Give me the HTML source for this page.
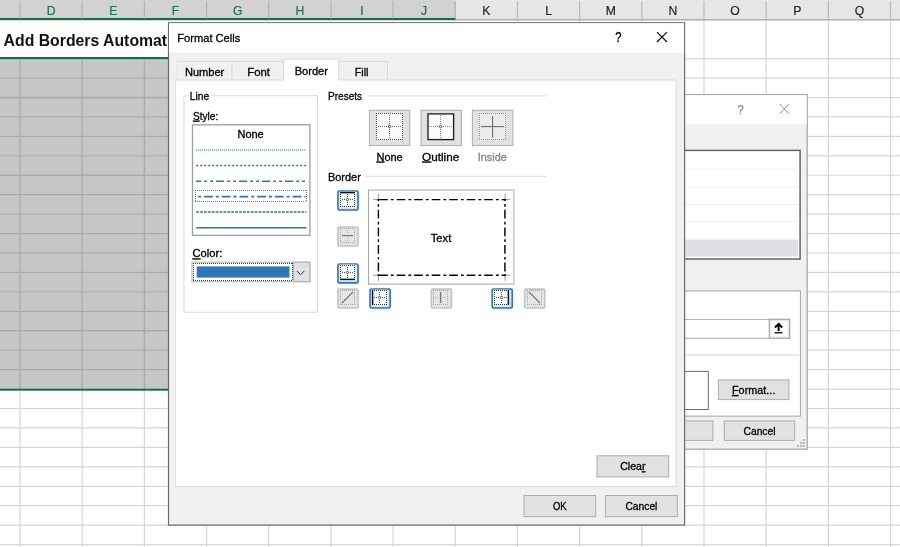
<!DOCTYPE html>
<html lang="en"><head><meta charset="utf-8"><title>Format Cells</title>
<style>
html,body{margin:0;padding:0;background:#fff;overflow:hidden}
svg{display:block;will-change:transform;opacity:0.999}
text{font-family:"Liberation Sans", sans-serif;}
</style></head>
<body>
<svg width="900" height="547" viewBox="0 0 900 547">
<rect x="0" y="0" width="900" height="547" fill="#ffffff"/>
<rect x="0" y="59.5" width="455.66" height="329.58" fill="#c6c6c6"/>
<line x1="20.00" y1="20" x2="20.00" y2="547" stroke="#d6d6d6" stroke-width="1.2"/>
<line x1="82.18" y1="20" x2="82.18" y2="547" stroke="#d6d6d6" stroke-width="1.2"/>
<line x1="144.36" y1="20" x2="144.36" y2="547" stroke="#d6d6d6" stroke-width="1.2"/>
<line x1="206.54" y1="20" x2="206.54" y2="547" stroke="#d6d6d6" stroke-width="1.2"/>
<line x1="268.72" y1="20" x2="268.72" y2="547" stroke="#d6d6d6" stroke-width="1.2"/>
<line x1="330.90" y1="20" x2="330.90" y2="547" stroke="#d6d6d6" stroke-width="1.2"/>
<line x1="393.08" y1="20" x2="393.08" y2="547" stroke="#d6d6d6" stroke-width="1.2"/>
<line x1="455.26" y1="20" x2="455.26" y2="547" stroke="#d6d6d6" stroke-width="1.2"/>
<line x1="517.44" y1="20" x2="517.44" y2="547" stroke="#d6d6d6" stroke-width="1.2"/>
<line x1="579.62" y1="20" x2="579.62" y2="547" stroke="#d6d6d6" stroke-width="1.2"/>
<line x1="641.80" y1="20" x2="641.80" y2="547" stroke="#d6d6d6" stroke-width="1.2"/>
<line x1="703.98" y1="20" x2="703.98" y2="547" stroke="#d6d6d6" stroke-width="1.2"/>
<line x1="766.16" y1="20" x2="766.16" y2="547" stroke="#d6d6d6" stroke-width="1.2"/>
<line x1="828.34" y1="20" x2="828.34" y2="547" stroke="#d6d6d6" stroke-width="1.2"/>
<line x1="890.52" y1="20" x2="890.52" y2="547" stroke="#d6d6d6" stroke-width="1.2"/>
<line x1="0" y1="58.60" x2="900" y2="58.60" stroke="#d6d6d6" stroke-width="1.2"/>
<line x1="0" y1="78.04" x2="900" y2="78.04" stroke="#d6d6d6" stroke-width="1.2"/>
<line x1="0" y1="97.48" x2="900" y2="97.48" stroke="#d6d6d6" stroke-width="1.2"/>
<line x1="0" y1="116.92" x2="900" y2="116.92" stroke="#d6d6d6" stroke-width="1.2"/>
<line x1="0" y1="136.36" x2="900" y2="136.36" stroke="#d6d6d6" stroke-width="1.2"/>
<line x1="0" y1="155.80" x2="900" y2="155.80" stroke="#d6d6d6" stroke-width="1.2"/>
<line x1="0" y1="175.24" x2="900" y2="175.24" stroke="#d6d6d6" stroke-width="1.2"/>
<line x1="0" y1="194.68" x2="900" y2="194.68" stroke="#d6d6d6" stroke-width="1.2"/>
<line x1="0" y1="214.12" x2="900" y2="214.12" stroke="#d6d6d6" stroke-width="1.2"/>
<line x1="0" y1="233.56" x2="900" y2="233.56" stroke="#d6d6d6" stroke-width="1.2"/>
<line x1="0" y1="253.00" x2="900" y2="253.00" stroke="#d6d6d6" stroke-width="1.2"/>
<line x1="0" y1="272.44" x2="900" y2="272.44" stroke="#d6d6d6" stroke-width="1.2"/>
<line x1="0" y1="291.88" x2="900" y2="291.88" stroke="#d6d6d6" stroke-width="1.2"/>
<line x1="0" y1="311.32" x2="900" y2="311.32" stroke="#d6d6d6" stroke-width="1.2"/>
<line x1="0" y1="330.76" x2="900" y2="330.76" stroke="#d6d6d6" stroke-width="1.2"/>
<line x1="0" y1="350.20" x2="900" y2="350.20" stroke="#d6d6d6" stroke-width="1.2"/>
<line x1="0" y1="369.64" x2="900" y2="369.64" stroke="#d6d6d6" stroke-width="1.2"/>
<line x1="0" y1="389.08" x2="900" y2="389.08" stroke="#d6d6d6" stroke-width="1.2"/>
<line x1="0" y1="408.52" x2="900" y2="408.52" stroke="#d6d6d6" stroke-width="1.2"/>
<line x1="0" y1="427.96" x2="900" y2="427.96" stroke="#d6d6d6" stroke-width="1.2"/>
<line x1="0" y1="447.40" x2="900" y2="447.40" stroke="#d6d6d6" stroke-width="1.2"/>
<line x1="0" y1="466.84" x2="900" y2="466.84" stroke="#d6d6d6" stroke-width="1.2"/>
<line x1="0" y1="486.28" x2="900" y2="486.28" stroke="#d6d6d6" stroke-width="1.2"/>
<line x1="0" y1="505.72" x2="900" y2="505.72" stroke="#d6d6d6" stroke-width="1.2"/>
<line x1="0" y1="525.16" x2="900" y2="525.16" stroke="#d6d6d6" stroke-width="1.2"/>
<line x1="0" y1="544.60" x2="900" y2="544.60" stroke="#d6d6d6" stroke-width="1.2"/>
<line x1="20.00" y1="60" x2="20.00" y2="389.08" stroke="#a9a9a9" stroke-width="1.4"/>
<line x1="82.18" y1="60" x2="82.18" y2="389.08" stroke="#a9a9a9" stroke-width="1.4"/>
<line x1="144.36" y1="60" x2="144.36" y2="389.08" stroke="#a9a9a9" stroke-width="1.4"/>
<line x1="206.54" y1="60" x2="206.54" y2="389.08" stroke="#a9a9a9" stroke-width="1.4"/>
<line x1="268.72" y1="60" x2="268.72" y2="389.08" stroke="#a9a9a9" stroke-width="1.4"/>
<line x1="330.90" y1="60" x2="330.90" y2="389.08" stroke="#a9a9a9" stroke-width="1.4"/>
<line x1="393.08" y1="60" x2="393.08" y2="389.08" stroke="#a9a9a9" stroke-width="1.4"/>
<line x1="0" y1="78.04" x2="455.66" y2="78.04" stroke="#a9a9a9" stroke-width="1.3"/>
<line x1="0" y1="97.48" x2="455.66" y2="97.48" stroke="#a9a9a9" stroke-width="1.3"/>
<line x1="0" y1="116.92" x2="455.66" y2="116.92" stroke="#a9a9a9" stroke-width="1.3"/>
<line x1="0" y1="136.36" x2="455.66" y2="136.36" stroke="#a9a9a9" stroke-width="1.3"/>
<line x1="0" y1="155.80" x2="455.66" y2="155.80" stroke="#a9a9a9" stroke-width="1.3"/>
<line x1="0" y1="175.24" x2="455.66" y2="175.24" stroke="#a9a9a9" stroke-width="1.3"/>
<line x1="0" y1="194.68" x2="455.66" y2="194.68" stroke="#a9a9a9" stroke-width="1.3"/>
<line x1="0" y1="214.12" x2="455.66" y2="214.12" stroke="#a9a9a9" stroke-width="1.3"/>
<line x1="0" y1="233.56" x2="455.66" y2="233.56" stroke="#a9a9a9" stroke-width="1.3"/>
<line x1="0" y1="253.00" x2="455.66" y2="253.00" stroke="#a9a9a9" stroke-width="1.3"/>
<line x1="0" y1="272.44" x2="455.66" y2="272.44" stroke="#a9a9a9" stroke-width="1.3"/>
<line x1="0" y1="291.88" x2="455.66" y2="291.88" stroke="#a9a9a9" stroke-width="1.3"/>
<line x1="0" y1="311.32" x2="455.66" y2="311.32" stroke="#a9a9a9" stroke-width="1.3"/>
<line x1="0" y1="330.76" x2="455.66" y2="330.76" stroke="#a9a9a9" stroke-width="1.3"/>
<line x1="0" y1="350.20" x2="455.66" y2="350.20" stroke="#a9a9a9" stroke-width="1.3"/>
<line x1="0" y1="369.64" x2="455.66" y2="369.64" stroke="#a9a9a9" stroke-width="1.3"/>
<rect x="0" y="20" width="455.66" height="37.2" fill="#ffffff"/>
<rect x="0" y="59.2" width="455.66" height="1" fill="#e2e2e2"/>
<rect x="0" y="57" width="456.66" height="2.3" fill="#107040"/>
<rect x="0" y="388.68" width="456.66" height="2" fill="#107040"/>
<text x="3.6" y="45.5" font-family='"Liberation Sans", sans-serif' font-weight="700" font-size="15.8" fill="#111">Add Borders Automatically</text>
<rect x="0" y="0" width="455.66" height="18.2" fill="#d2d2d2"/>
<rect x="455.66" y="0" width="444.34" height="19.4" fill="#e6e6e6"/>
<rect x="455.66" y="19.1" width="444.34" height="1.4" fill="#a8a8a8"/>
<rect x="0" y="18" width="455.66" height="2.2" fill="#107040"/>
<line x1="20.00" y1="1" x2="20.00" y2="18.4" stroke="#b4b4b4" stroke-width="1.3"/>
<line x1="82.18" y1="1" x2="82.18" y2="18.4" stroke="#b4b4b4" stroke-width="1.3"/>
<line x1="144.36" y1="1" x2="144.36" y2="18.4" stroke="#b4b4b4" stroke-width="1.3"/>
<line x1="206.54" y1="1" x2="206.54" y2="18.4" stroke="#b4b4b4" stroke-width="1.3"/>
<line x1="268.72" y1="1" x2="268.72" y2="18.4" stroke="#b4b4b4" stroke-width="1.3"/>
<line x1="330.90" y1="1" x2="330.90" y2="18.4" stroke="#b4b4b4" stroke-width="1.3"/>
<line x1="393.08" y1="1" x2="393.08" y2="18.4" stroke="#b4b4b4" stroke-width="1.3"/>
<line x1="455.26" y1="1" x2="455.26" y2="18.4" stroke="#b4b4b4" stroke-width="1.3"/>
<line x1="517.44" y1="1" x2="517.44" y2="18.4" stroke="#bdbdbd" stroke-width="1.3"/>
<line x1="579.62" y1="1" x2="579.62" y2="18.4" stroke="#bdbdbd" stroke-width="1.3"/>
<line x1="641.80" y1="1" x2="641.80" y2="18.4" stroke="#bdbdbd" stroke-width="1.3"/>
<line x1="703.98" y1="1" x2="703.98" y2="18.4" stroke="#bdbdbd" stroke-width="1.3"/>
<line x1="766.16" y1="1" x2="766.16" y2="18.4" stroke="#bdbdbd" stroke-width="1.3"/>
<line x1="828.34" y1="1" x2="828.34" y2="18.4" stroke="#bdbdbd" stroke-width="1.3"/>
<line x1="890.52" y1="1" x2="890.52" y2="18.4" stroke="#bdbdbd" stroke-width="1.3"/>
<text x="51.09" y="14.5" text-anchor="middle" font-family='"Liberation Sans", sans-serif' font-size="12.2" fill="#1e7145" stroke="#1e7145" stroke-width="0.2">D</text>
<text x="113.27" y="14.5" text-anchor="middle" font-family='"Liberation Sans", sans-serif' font-size="12.2" fill="#1e7145" stroke="#1e7145" stroke-width="0.2">E</text>
<text x="175.45" y="14.5" text-anchor="middle" font-family='"Liberation Sans", sans-serif' font-size="12.2" fill="#1e7145" stroke="#1e7145" stroke-width="0.2">F</text>
<text x="237.63" y="14.5" text-anchor="middle" font-family='"Liberation Sans", sans-serif' font-size="12.2" fill="#1e7145" stroke="#1e7145" stroke-width="0.2">G</text>
<text x="299.81" y="14.5" text-anchor="middle" font-family='"Liberation Sans", sans-serif' font-size="12.2" fill="#1e7145" stroke="#1e7145" stroke-width="0.2">H</text>
<text x="361.99" y="14.5" text-anchor="middle" font-family='"Liberation Sans", sans-serif' font-size="12.2" fill="#1e7145" stroke="#1e7145" stroke-width="0.2">I</text>
<text x="424.17" y="14.5" text-anchor="middle" font-family='"Liberation Sans", sans-serif' font-size="12.2" fill="#1e7145" stroke="#1e7145" stroke-width="0.2">J</text>
<text x="486.35" y="14.5" text-anchor="middle" font-family='"Liberation Sans", sans-serif' font-size="12.2" fill="#262626" stroke="#262626" stroke-width="0.2">K</text>
<text x="548.53" y="14.5" text-anchor="middle" font-family='"Liberation Sans", sans-serif' font-size="12.2" fill="#262626" stroke="#262626" stroke-width="0.2">L</text>
<text x="610.71" y="14.5" text-anchor="middle" font-family='"Liberation Sans", sans-serif' font-size="12.2" fill="#262626" stroke="#262626" stroke-width="0.2">M</text>
<text x="672.89" y="14.5" text-anchor="middle" font-family='"Liberation Sans", sans-serif' font-size="12.2" fill="#262626" stroke="#262626" stroke-width="0.2">N</text>
<text x="735.07" y="14.5" text-anchor="middle" font-family='"Liberation Sans", sans-serif' font-size="12.2" fill="#262626" stroke="#262626" stroke-width="0.2">O</text>
<text x="797.25" y="14.5" text-anchor="middle" font-family='"Liberation Sans", sans-serif' font-size="12.2" fill="#262626" stroke="#262626" stroke-width="0.2">P</text>
<text x="859.43" y="14.5" text-anchor="middle" font-family='"Liberation Sans", sans-serif' font-size="12.2" fill="#262626" stroke="#262626" stroke-width="0.2">Q</text>
<rect x="560" y="94.7" width="247.20000000000005" height="354.50" fill="#f0f0f0" stroke="#a2a2a2" stroke-width="1.2"/>
<rect x="560.5" y="95.2" width="246.20000000000005" height="29" fill="#ffffff"/>
<text x="740.6" y="113.8" font-family='"Liberation Sans", sans-serif' font-size="13.6" fill="#8c8c8c" stroke="#8c8c8c" stroke-width="0.3" text-anchor="middle" textLength="6.2" lengthAdjust="spacingAndGlyphs">?</text>
<path d="M779.6 104 L789.2 113.8 M789.2 104 L779.6 113.8" stroke="#8a8a8a" stroke-width="1" fill="none"/>
<rect x="600" y="150.4" width="200.1" height="108.6" fill="#ffffff" stroke="#60636a" stroke-width="1.5"/>
<line x1="600" y1="169.1" x2="798" y2="169.1" stroke="#efefef" stroke-width="1"/>
<line x1="600" y1="186.9" x2="798" y2="186.9" stroke="#efefef" stroke-width="1"/>
<line x1="600" y1="204.4" x2="798" y2="204.4" stroke="#efefef" stroke-width="1"/>
<line x1="600" y1="221.7" x2="798" y2="221.7" stroke="#efefef" stroke-width="1"/>
<rect x="600" y="239.5" width="198" height="17" fill="#e0e0e4"/>
<rect x="600" y="290.9" width="200.4" height="125.2" fill="#ffffff" stroke="#a0a4b0" stroke-width="1"/>
<rect x="600" y="319.4" width="189.7" height="18.8" fill="#ffffff" stroke="#abadb3" stroke-width="1"/>
<rect x="769.3" y="319.4" width="20.3" height="18.9" fill="#ececec" stroke="#a9adb5" stroke-width="1.3"/>
<rect x="771.4" y="321.4" width="16" height="15" fill="#ffffff"/>
<path d="M778.6 324.4 L778.6 331 M775 327.5 L778.6 323.9 L782.2 327.5" stroke="#000" stroke-width="2" fill="none" stroke-linejoin="miter"/>
<rect x="774.6" y="332.1" width="7.8" height="1.3" fill="#000"/>
<line x1="600" y1="354.9" x2="799" y2="354.9" stroke="#d5d5d5" stroke-width="1"/>
<rect x="600" y="371.4" width="108.3" height="38.1" fill="#ffffff" stroke="#6e6e6e" stroke-width="1"/>
<rect x="718.4" y="379.9" width="70.60" height="19.70" fill="#e1e1e1" stroke="#adadad" stroke-width="1"/>
<text x="753.70" y="394.05" font-family='"Liberation Sans", sans-serif' font-size="10.5" fill="#000" stroke="#000" stroke-width="0.3" text-anchor="middle" textLength="43.4" lengthAdjust="spacingAndGlyphs"><tspan text-decoration="underline">F</tspan>ormat...</text>
<rect x="642" y="420.9" width="70.90" height="19.50" fill="#e1e1e1" stroke="#adadad" stroke-width="1"/>
<text x="677.45" y="434.55" font-family='"Liberation Sans", sans-serif' font-size="10.5" fill="#000" stroke="#000" stroke-width="0.3" text-anchor="middle" textLength="13.7" lengthAdjust="spacingAndGlyphs">OK</text>
<rect x="724.3" y="420.9" width="70.40" height="19.50" fill="#e1e1e1" stroke="#adadad" stroke-width="1"/>
<text x="759.50" y="434.70" font-family='"Liberation Sans", sans-serif' font-size="10.5" fill="#000" stroke="#000" stroke-width="0.3" text-anchor="middle" textLength="32" lengthAdjust="spacingAndGlyphs">Cancel</text>
<rect x="802.8" y="439.0" width="2" height="2" fill="#b6b6b6"/>
<rect x="802.8" y="442.0" width="2" height="2" fill="#b6b6b6"/>
<rect x="802.8" y="444.9" width="2" height="2" fill="#b6b6b6"/>
<rect x="799.9" y="442.0" width="2" height="2" fill="#b6b6b6"/>
<rect x="799.9" y="444.9" width="2" height="2" fill="#b6b6b6"/>
<rect x="796.9" y="444.9" width="2" height="2" fill="#b6b6b6"/>
<rect x="168.5" y="22.75" width="516.10" height="502.35" fill="#f0f0f0" stroke="#6a6a6a" stroke-width="1.2"/>
<rect x="169.0" y="23.25" width="515.10" height="29.6" fill="#ffffff"/>
<text x="177.3" y="41.8" font-family='"Liberation Sans", sans-serif' font-size="11.6" fill="#000" stroke="#000" stroke-width="0.3" text-anchor="start" textLength="63" lengthAdjust="spacingAndGlyphs">Format Cells</text>
<text x="618.4" y="42" font-family='"Liberation Sans", sans-serif' font-size="13.8" fill="#000" stroke="#000" stroke-width="0.3" text-anchor="middle" textLength="6.2" lengthAdjust="spacingAndGlyphs">?</text>
<path d="M657 32.1 L667 42 M667 32.1 L657 42" stroke="#000" stroke-width="1.1" fill="none"/>
<rect x="175.5" y="80" width="500.6" height="406.5" fill="#ffffff" stroke="#dcdcdc" stroke-width="1"/>
<path d="M177 61.5 L232 61.5 L232 79.5" fill="none" stroke="#d9d9d9" stroke-width="1"/>
<line x1="177" y1="61.5" x2="177" y2="79.5" stroke="#e6e6e6" stroke-width="1"/>
<text x="184.9" y="76.2" font-family='"Liberation Sans", sans-serif' font-size="10.8" fill="#000" stroke="#000" stroke-width="0.3" text-anchor="start" textLength="39.4" lengthAdjust="spacingAndGlyphs">Number</text>
<path d="M232 61.5 L283.5 61.5 L283.5 79.5" fill="none" stroke="#d9d9d9" stroke-width="1"/>
<text x="247.2" y="76.2" font-family='"Liberation Sans", sans-serif' font-size="10.8" fill="#000" stroke="#000" stroke-width="0.3" text-anchor="start" textLength="22.8" lengthAdjust="spacingAndGlyphs">Font</text>
<path d="M338.7 61.5 L387.5 61.5 L387.5 79.5" fill="none" stroke="#d9d9d9" stroke-width="1"/>
<text x="354.7" y="76.2" font-family='"Liberation Sans", sans-serif' font-size="10.8" fill="#000" stroke="#000" stroke-width="0.3" text-anchor="start" textLength="13.8" lengthAdjust="spacingAndGlyphs">Fill</text>
<rect x="283.5" y="59.3" width="55.20" height="22" fill="#ffffff"/>
<path d="M283.5 80.6 L283.5 59.3 L338.7 59.3 L338.7 80.6" fill="none" stroke="#dadada" stroke-width="1"/>
<text x="294.7" y="74.9" font-family='"Liberation Sans", sans-serif' font-size="10.8" fill="#000" stroke="#000" stroke-width="0.3" text-anchor="start" textLength="33.3" lengthAdjust="spacingAndGlyphs">Border</text>
<rect x="184" y="95.7" width="133.5" height="216.5" fill="none" stroke="#dcdcdc" stroke-width="1"/>
<rect x="187.5" y="90" width="24" height="12" fill="#ffffff"/>
<text x="189.7" y="100" font-family='"Liberation Sans", sans-serif' font-size="10.8" fill="#000" stroke="#000" stroke-width="0.3" text-anchor="start" textLength="19.5" lengthAdjust="spacingAndGlyphs">Line</text>
<text x="193" y="119.7" font-family='"Liberation Sans", sans-serif' font-size="10.8" fill="#000" stroke="#000" stroke-width="0.3" text-anchor="start" textLength="25.3" lengthAdjust="spacingAndGlyphs"><tspan text-decoration="underline">S</tspan>tyle:</text>
<rect x="192.5" y="124.8" width="117.4" height="110.6" fill="#ffffff" stroke="#9a9ea6" stroke-width="1.3"/>
<text x="250.6" y="138" font-family='"Liberation Sans", sans-serif' font-size="10.8" fill="#000" stroke="#000" stroke-width="0.3" text-anchor="middle" textLength="26.3" lengthAdjust="spacingAndGlyphs">None</text>
<line x1="196.2" y1="150.1" x2="306.4" y2="150.1" stroke="#5b9bd5" stroke-width="1.5" stroke-dasharray="1 1"/>
<line x1="196.2" y1="165.5" x2="306.4" y2="165.5" stroke="#2e75b6" stroke-width="1.3" stroke-dasharray="2 2"/>
<line x1="196.2" y1="181.2" x2="306.4" y2="181.2" stroke="#2e75b6" stroke-width="1.6" stroke-dasharray="8.2 3 2.9 3 2.9 3" stroke-dashoffset="3.2"/>
<line x1="198.2" y1="196.6" x2="305.6" y2="196.6" stroke="#2e75b6" stroke-width="1.6" stroke-dasharray="2.9 3 8.7 3.1"/>
<line x1="195" y1="190.5" x2="307" y2="190.5" stroke="#777" stroke-width="1" stroke-dasharray="1 1" stroke-opacity="1"/>
<line x1="195" y1="201.5" x2="307" y2="201.5" stroke="#777" stroke-width="1" stroke-dasharray="1 1" stroke-opacity="1"/>
<line x1="195.5" y1="190" x2="195.5" y2="202" stroke="#777" stroke-width="1" stroke-dasharray="1 1" stroke-opacity="1"/>
<line x1="306.5" y1="190" x2="306.5" y2="202" stroke="#777" stroke-width="1" stroke-dasharray="1 1" stroke-opacity="1"/>
<line x1="196.2" y1="212.1" x2="306.4" y2="212.1" stroke="#2e75b6" stroke-width="1.5" stroke-dasharray="2.8 1.1"/>
<line x1="196.2" y1="227.7" x2="306.4" y2="227.7" stroke="#2e75b6" stroke-width="1.4"/>
<text x="192.5" y="257.4" font-family='"Liberation Sans", sans-serif' font-size="10.8" fill="#000" stroke="#000" stroke-width="0.3" text-anchor="start" textLength="29.8" lengthAdjust="spacingAndGlyphs"><tspan text-decoration="underline">C</tspan>olor:</text>
<rect x="192" y="262.2" width="117.9" height="19.5" fill="#ffffff" stroke="#adadad" stroke-width="1"/>
<rect x="293.4" y="262.2" width="16.5" height="19.5" fill="#e1e1e1" stroke="#adadad" stroke-width="1"/>
<line x1="193" y1="263.5" x2="293" y2="263.5" stroke="#444" stroke-width="1" stroke-dasharray="1 1" stroke-opacity="1"/>
<line x1="193" y1="280.5" x2="293" y2="280.5" stroke="#444" stroke-width="1" stroke-dasharray="1 1" stroke-opacity="1"/>
<line x1="193.5" y1="263" x2="193.5" y2="281" stroke="#444" stroke-width="1" stroke-dasharray="1 1" stroke-opacity="1"/>
<line x1="292.5" y1="263" x2="292.5" y2="281" stroke="#444" stroke-width="1" stroke-dasharray="1 1" stroke-opacity="1"/>
<rect x="196.7" y="266.4" width="92.8" height="11.2" fill="#2e75b6"/>
<path d="M296.9 271 L300.6 274.8 L304.3 271" fill="none" stroke="#333" stroke-width="1"/>
<text x="328" y="99.7" font-family='"Liberation Sans", sans-serif' font-size="10.8" fill="#000" stroke="#000" stroke-width="0.3" text-anchor="start" textLength="34.1" lengthAdjust="spacingAndGlyphs">Presets</text>
<line x1="367.5" y1="95.9" x2="546.1" y2="95.9" stroke="#dcdcdc" stroke-width="1"/>
<text x="328" y="180.5" font-family='"Liberation Sans", sans-serif' font-size="10.8" fill="#000" stroke="#000" stroke-width="0.3" text-anchor="start" textLength="32.8" lengthAdjust="spacingAndGlyphs">Border</text>
<line x1="365.9" y1="176.3" x2="546.1" y2="176.3" stroke="#dcdcdc" stroke-width="1"/>
<rect x="369.4" y="110.3" width="40.40" height="35.30" fill="#e1e1e1" stroke="#adadad" stroke-width="1"/>
<rect x="376" y="113" width="27" height="27" fill="#fafafa"/>
<line x1="376" y1="113.5" x2="403" y2="113.5" stroke="#4a4a4a" stroke-width="1" stroke-dasharray="1 1" stroke-opacity="1"/>
<line x1="376" y1="139.5" x2="403" y2="139.5" stroke="#4a4a4a" stroke-width="1" stroke-dasharray="1 1" stroke-opacity="1"/>
<line x1="376.5" y1="113" x2="376.5" y2="140" stroke="#4a4a4a" stroke-width="1" stroke-dasharray="1 1" stroke-opacity="1"/>
<line x1="402.5" y1="113" x2="402.5" y2="140" stroke="#4a4a4a" stroke-width="1" stroke-dasharray="1 1" stroke-opacity="1"/>
<line x1="378" y1="126.5" x2="401" y2="126.5" stroke="#6a6a6a" stroke-width="1" stroke-dasharray="1 1" stroke-opacity="1"/>
<line x1="389.5" y1="115" x2="389.5" y2="138" stroke="#6a6a6a" stroke-width="1" stroke-dasharray="1 1" stroke-opacity="1"/>
<circle cx="389.5" cy="126.5" r="1.4" fill="none" stroke="#666" stroke-width="0.8"/>
<rect x="421" y="110.3" width="40.40" height="35.30" fill="#e1e1e1" stroke="#adadad" stroke-width="1"/>
<rect x="428" y="113.9" width="25.6" height="25.7" fill="#fafafa" stroke="#1a1a1a" stroke-width="1.3"/>
<line x1="429" y1="126.5" x2="452" y2="126.5" stroke="#8a8a8a" stroke-width="1" stroke-dasharray="1 1" stroke-opacity="1"/>
<line x1="440.5" y1="115" x2="440.5" y2="138" stroke="#8a8a8a" stroke-width="1" stroke-dasharray="1 1" stroke-opacity="1"/>
<circle cx="440.5" cy="126.5" r="1.4" fill="none" stroke="#777" stroke-width="0.8"/>
<rect x="472.4" y="110.3" width="40.50" height="35.30" fill="#e1e1e1" stroke="#adadad" stroke-width="1"/>
<rect x="479" y="113" width="27" height="27" fill="#ebebeb"/>
<line x1="479" y1="113.5" x2="506" y2="113.5" stroke="#8f8f8f" stroke-width="1" stroke-dasharray="1 1" stroke-opacity="1"/>
<line x1="479" y1="139.5" x2="506" y2="139.5" stroke="#8f8f8f" stroke-width="1" stroke-dasharray="1 1" stroke-opacity="1"/>
<line x1="479.5" y1="113" x2="479.5" y2="140" stroke="#8f8f8f" stroke-width="1" stroke-dasharray="1 1" stroke-opacity="1"/>
<line x1="505.5" y1="113" x2="505.5" y2="140" stroke="#8f8f8f" stroke-width="1" stroke-dasharray="1 1" stroke-opacity="1"/>
<line x1="481" y1="126.6" x2="504" y2="126.6" stroke="#6c6c6c" stroke-width="1.1"/>
<line x1="492.6" y1="116" x2="492.6" y2="137.5" stroke="#6c6c6c" stroke-width="1.1"/>
<text x="376.5" y="160.6" font-family='"Liberation Sans", sans-serif' font-size="10.8" fill="#000" stroke="#000" stroke-width="0.3" text-anchor="start" textLength="26.2" lengthAdjust="spacingAndGlyphs"><tspan text-decoration="underline">N</tspan>one</text>
<text x="422.1" y="160.6" font-family='"Liberation Sans", sans-serif' font-size="10.8" fill="#000" stroke="#000" stroke-width="0.3" text-anchor="start" textLength="37.1" lengthAdjust="spacingAndGlyphs"><tspan text-decoration="underline">O</tspan>utline</text>
<text x="477.8" y="160.6" font-family='"Liberation Sans", sans-serif' font-size="10.8" fill="#858585" stroke="#858585" stroke-width="0.3" text-anchor="start" textLength="29" lengthAdjust="spacingAndGlyphs">Inside</text>
<rect x="368.5" y="190" width="145.4" height="94.1" fill="#ffffff" stroke="#a3a7b0" stroke-width="1"/>
<line x1="378.4" y1="199.6" x2="373.09999999999997" y2="199.6" stroke="#8c8c8c" stroke-width="0.9"/>
<line x1="378.4" y1="199.6" x2="378.4" y2="194.0" stroke="#8c8c8c" stroke-width="0.9"/>
<line x1="505.1" y1="199.6" x2="510.40000000000003" y2="199.6" stroke="#8c8c8c" stroke-width="0.9"/>
<line x1="505.1" y1="199.6" x2="505.1" y2="194.0" stroke="#8c8c8c" stroke-width="0.9"/>
<line x1="378.4" y1="275.2" x2="373.09999999999997" y2="275.2" stroke="#8c8c8c" stroke-width="0.9"/>
<line x1="378.4" y1="275.2" x2="378.4" y2="280.8" stroke="#8c8c8c" stroke-width="0.9"/>
<line x1="505.1" y1="275.2" x2="510.40000000000003" y2="275.2" stroke="#8c8c8c" stroke-width="0.9"/>
<line x1="505.1" y1="275.2" x2="505.1" y2="280.8" stroke="#8c8c8c" stroke-width="0.9"/>
<line x1="378.4" y1="199.6" x2="505.1" y2="199.6" stroke="#000" stroke-width="1.4" stroke-dasharray="8.6 3.1 2.8 3.0" stroke-dashoffset="16.7"/>
<line x1="378.4" y1="275.2" x2="505.1" y2="275.2" stroke="#000" stroke-width="1.4" stroke-dasharray="8.6 3.1 2.8 3.0" stroke-dashoffset="16.7"/>
<line x1="378.4" y1="199.6" x2="378.4" y2="275.2" stroke="#000" stroke-width="1.4" stroke-dasharray="8.8 3.1 2.7 3.0" stroke-dashoffset="7.4"/>
<line x1="504.90000000000003" y1="199.6" x2="504.90000000000003" y2="275.2" stroke="#1c1c1c" stroke-width="1.6" stroke-dasharray="8.8 3.1 2.7 3.0" stroke-dashoffset="7.4"/>
<rect x="377.60" y="198.90" width="1.6" height="1.4" fill="#000"/>
<rect x="504.30" y="198.90" width="1.6" height="1.4" fill="#000"/>
<rect x="377.60" y="274.50" width="1.6" height="1.4" fill="#000"/>
<rect x="504.30" y="274.50" width="1.6" height="1.4" fill="#000"/>
<text x="441" y="241.9" font-family='"Liberation Sans", sans-serif' font-size="10.8" fill="#000" stroke="#000" stroke-width="0.3" text-anchor="middle" textLength="20.5" lengthAdjust="spacingAndGlyphs">Text</text>
<rect x="337.95" y="191.05" width="20.10" height="18.90" fill="#cce4f7" stroke="#2b74c0" stroke-width="1.6" rx="1.2"/>
<rect x="339.4" y="191.6" width="16.2" height="15.9" fill="#ffffff"/>
<line x1="340" y1="206.5" x2="355" y2="206.5" stroke="#333" stroke-width="1" stroke-dasharray="1 1" stroke-opacity="1"/>
<line x1="340.5" y1="192" x2="340.5" y2="207" stroke="#333" stroke-width="1" stroke-dasharray="1 1" stroke-opacity="1"/>
<line x1="354.5" y1="192" x2="354.5" y2="207" stroke="#333" stroke-width="1" stroke-dasharray="1 1" stroke-opacity="1"/>
<line x1="342" y1="199.5" x2="353" y2="199.5" stroke="#4a4a4a" stroke-width="1" stroke-dasharray="1 1" stroke-opacity="1"/>
<line x1="347.5" y1="194" x2="347.5" y2="205" stroke="#4a4a4a" stroke-width="1" stroke-dasharray="1 1" stroke-opacity="1"/>
<circle cx="347.5" cy="199.5" r="1.25" fill="#ffffff" stroke="#4a4a4a" stroke-width="0.8"/>
<line x1="340" y1="192.6" x2="355" y2="192.6" stroke="#111" stroke-width="1.5"/>
<rect x="337.95" y="227.05" width="20.10" height="18.90" fill="#e5e5e5" stroke="#c4c4c4" stroke-width="1.6" rx="1.2"/>
<line x1="340" y1="228.5" x2="355" y2="228.5" stroke="#a4a4a4" stroke-width="1" stroke-dasharray="1 1" stroke-opacity="1"/>
<line x1="340" y1="242.5" x2="355" y2="242.5" stroke="#a4a4a4" stroke-width="1" stroke-dasharray="1 1" stroke-opacity="1"/>
<line x1="340.5" y1="228" x2="340.5" y2="243" stroke="#a4a4a4" stroke-width="1" stroke-dasharray="1 1" stroke-opacity="1"/>
<line x1="354.5" y1="228" x2="354.5" y2="243" stroke="#a4a4a4" stroke-width="1" stroke-dasharray="1 1" stroke-opacity="1"/>
<line x1="347.5" y1="230" x2="347.5" y2="233" stroke="#b2b2b2" stroke-width="1" stroke-dasharray="1 1" stroke-opacity="1"/>
<line x1="347.5" y1="238" x2="347.5" y2="241" stroke="#b2b2b2" stroke-width="1" stroke-dasharray="1 1" stroke-opacity="1"/>
<line x1="342" y1="235.6" x2="353" y2="235.6" stroke="#787878" stroke-width="1.3"/>
<rect x="337.95" y="263.95" width="20.10" height="18.90" fill="#cce4f7" stroke="#2b74c0" stroke-width="1.6" rx="1.2"/>
<rect x="339.4" y="264.6" width="16.2" height="15.9" fill="#ffffff"/>
<line x1="340" y1="265.5" x2="355" y2="265.5" stroke="#333" stroke-width="1" stroke-dasharray="1 1" stroke-opacity="1"/>
<line x1="340.5" y1="265" x2="340.5" y2="280" stroke="#333" stroke-width="1" stroke-dasharray="1 1" stroke-opacity="1"/>
<line x1="354.5" y1="265" x2="354.5" y2="280" stroke="#333" stroke-width="1" stroke-dasharray="1 1" stroke-opacity="1"/>
<line x1="342" y1="272.5" x2="353" y2="272.5" stroke="#4a4a4a" stroke-width="1" stroke-dasharray="1 1" stroke-opacity="1"/>
<line x1="347.5" y1="267" x2="347.5" y2="278" stroke="#4a4a4a" stroke-width="1" stroke-dasharray="1 1" stroke-opacity="1"/>
<circle cx="347.5" cy="272.5" r="1.25" fill="#ffffff" stroke="#4a4a4a" stroke-width="0.8"/>
<line x1="340" y1="279.4" x2="355" y2="279.4" stroke="#111" stroke-width="1.5"/>
<rect x="337.95" y="289.15" width="20.10" height="18.90" fill="#e5e5e5" stroke="#c4c4c4" stroke-width="1.6" rx="1.2"/>
<line x1="340" y1="290.5" x2="355" y2="290.5" stroke="#a4a4a4" stroke-width="1" stroke-dasharray="1 1" stroke-opacity="1"/>
<line x1="340" y1="304.5" x2="355" y2="304.5" stroke="#a4a4a4" stroke-width="1" stroke-dasharray="1 1" stroke-opacity="1"/>
<line x1="340.5" y1="290" x2="340.5" y2="305" stroke="#a4a4a4" stroke-width="1" stroke-dasharray="1 1" stroke-opacity="1"/>
<line x1="354.5" y1="290" x2="354.5" y2="305" stroke="#a4a4a4" stroke-width="1" stroke-dasharray="1 1" stroke-opacity="1"/>
<line x1="342" y1="303" x2="353" y2="292" stroke="#787878" stroke-width="1.2"/>
<rect x="370.05" y="289.15" width="20.10" height="18.90" fill="#cce4f7" stroke="#2b74c0" stroke-width="1.6" rx="1.2"/>
<rect x="371.4" y="289.6" width="16.2" height="15.9" fill="#ffffff"/>
<line x1="372" y1="290.5" x2="387" y2="290.5" stroke="#333" stroke-width="1" stroke-dasharray="1 1" stroke-opacity="1"/>
<line x1="372" y1="304.5" x2="387" y2="304.5" stroke="#333" stroke-width="1" stroke-dasharray="1 1" stroke-opacity="1"/>
<line x1="386.5" y1="290" x2="386.5" y2="305" stroke="#333" stroke-width="1" stroke-dasharray="1 1" stroke-opacity="1"/>
<line x1="374" y1="297.5" x2="385" y2="297.5" stroke="#4a4a4a" stroke-width="1" stroke-dasharray="1 1" stroke-opacity="1"/>
<line x1="379.5" y1="292" x2="379.5" y2="303" stroke="#4a4a4a" stroke-width="1" stroke-dasharray="1 1" stroke-opacity="1"/>
<circle cx="379.5" cy="297.5" r="1.25" fill="#ffffff" stroke="#4a4a4a" stroke-width="0.8"/>
<line x1="372.6" y1="290" x2="372.6" y2="305" stroke="#111" stroke-width="1.5"/>
<rect x="431.35" y="289.15" width="20.10" height="18.90" fill="#e5e5e5" stroke="#c4c4c4" stroke-width="1.6" rx="1.2"/>
<line x1="433" y1="290.5" x2="448" y2="290.5" stroke="#a4a4a4" stroke-width="1" stroke-dasharray="1 1" stroke-opacity="1"/>
<line x1="433" y1="304.5" x2="448" y2="304.5" stroke="#a4a4a4" stroke-width="1" stroke-dasharray="1 1" stroke-opacity="1"/>
<line x1="433.5" y1="290" x2="433.5" y2="305" stroke="#a4a4a4" stroke-width="1" stroke-dasharray="1 1" stroke-opacity="1"/>
<line x1="447.5" y1="290" x2="447.5" y2="305" stroke="#a4a4a4" stroke-width="1" stroke-dasharray="1 1" stroke-opacity="1"/>
<line x1="435" y1="297.5" x2="438" y2="297.5" stroke="#b2b2b2" stroke-width="1" stroke-dasharray="1 1" stroke-opacity="1"/>
<line x1="443" y1="297.5" x2="446" y2="297.5" stroke="#b2b2b2" stroke-width="1" stroke-dasharray="1 1" stroke-opacity="1"/>
<line x1="440.6" y1="292" x2="440.6" y2="303" stroke="#787878" stroke-width="1.5"/>
<rect x="492.15" y="289.15" width="20.10" height="18.90" fill="#cce4f7" stroke="#2b74c0" stroke-width="1.6" rx="1.2"/>
<rect x="493.4" y="289.6" width="16.2" height="15.9" fill="#ffffff"/>
<line x1="494" y1="290.5" x2="509" y2="290.5" stroke="#333" stroke-width="1" stroke-dasharray="1 1" stroke-opacity="1"/>
<line x1="494" y1="304.5" x2="509" y2="304.5" stroke="#333" stroke-width="1" stroke-dasharray="1 1" stroke-opacity="1"/>
<line x1="494.5" y1="290" x2="494.5" y2="305" stroke="#333" stroke-width="1" stroke-dasharray="1 1" stroke-opacity="1"/>
<line x1="496" y1="297.5" x2="507" y2="297.5" stroke="#4a4a4a" stroke-width="1" stroke-dasharray="1 1" stroke-opacity="1"/>
<line x1="501.5" y1="292" x2="501.5" y2="303" stroke="#4a4a4a" stroke-width="1" stroke-dasharray="1 1" stroke-opacity="1"/>
<circle cx="501.5" cy="297.5" r="1.25" fill="#ffffff" stroke="#4a4a4a" stroke-width="0.8"/>
<line x1="508.4" y1="290" x2="508.4" y2="305" stroke="#111" stroke-width="1.5"/>
<rect x="524.65" y="289.15" width="20.10" height="18.90" fill="#e5e5e5" stroke="#c4c4c4" stroke-width="1.6" rx="1.2"/>
<line x1="527" y1="290.5" x2="542" y2="290.5" stroke="#a4a4a4" stroke-width="1" stroke-dasharray="1 1" stroke-opacity="1"/>
<line x1="527" y1="304.5" x2="542" y2="304.5" stroke="#a4a4a4" stroke-width="1" stroke-dasharray="1 1" stroke-opacity="1"/>
<line x1="527.5" y1="290" x2="527.5" y2="305" stroke="#a4a4a4" stroke-width="1" stroke-dasharray="1 1" stroke-opacity="1"/>
<line x1="541.5" y1="290" x2="541.5" y2="305" stroke="#a4a4a4" stroke-width="1" stroke-dasharray="1 1" stroke-opacity="1"/>
<line x1="529" y1="292" x2="540" y2="303" stroke="#787878" stroke-width="1.2"/>
<rect x="597" y="455.8" width="71.70" height="21.10" fill="#e1e1e1" stroke="#adadad" stroke-width="1"/>
<text x="632.85" y="470.25" font-family='"Liberation Sans", sans-serif' font-size="10.5" fill="#000" stroke="#000" stroke-width="0.3" text-anchor="middle" textLength="25.3" lengthAdjust="spacingAndGlyphs">Clea<tspan text-decoration="underline">r</tspan></text>
<rect x="524" y="495.5" width="71.70" height="21.10" fill="#e1e1e1" stroke="#adadad" stroke-width="1"/>
<text x="559.85" y="509.95" font-family='"Liberation Sans", sans-serif' font-size="10.5" fill="#000" stroke="#000" stroke-width="0.3" text-anchor="middle" textLength="13.7" lengthAdjust="spacingAndGlyphs">OK</text>
<rect x="605.4" y="495.5" width="72.00" height="21.10" fill="#e1e1e1" stroke="#adadad" stroke-width="1"/>
<text x="641.40" y="509.95" font-family='"Liberation Sans", sans-serif' font-size="10.5" fill="#000" stroke="#000" stroke-width="0.3" text-anchor="middle" textLength="32" lengthAdjust="spacingAndGlyphs">Cancel</text>
</svg>
</body></html>
